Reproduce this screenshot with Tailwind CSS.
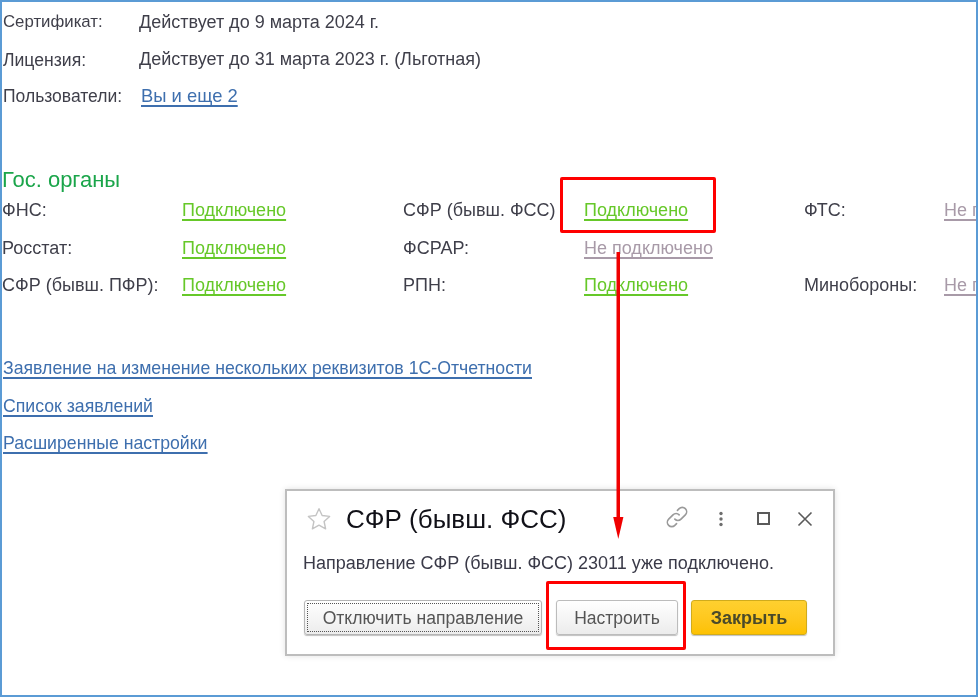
<!DOCTYPE html>
<html lang="ru">
<head>
<meta charset="utf-8">
<script src="https://cdn.jsdelivr.net/npm/@tailwindcss/browser@4"></script>
</head>
<body class="m-0 bg-white">
<div class="relative w-[978px] h-[697px] overflow-hidden bg-white border-2 border-[#5b9bd5] font-['Liberation_Sans',Arial,sans-serif] text-[18px] leading-[20px] text-[#3f3f4a]">
  <div class="flex flex-col pl-px pt-[10px] blur-[0.45px] whitespace-nowrap [text-decoration-skip-ink:none]">
    <div class="grid grid-cols-[136px_1fr] gap-y-[17px]">
      <div class="h-[20px] text-[16.8px]">Сертификат:</div><div class="h-[20px]">Действует до 9 марта 2024 г.</div>
      <div class="h-[20px] translate-y-px text-[17.6px]">Лицензия:</div><div class="h-[20px]">Действует до 31 марта 2023 г. (Льготная)</div>
      <div class="h-[20px] text-[17.5px]">Пользователи:</div><div class="h-[20px] pl-[2px]"><a class="underline decoration-[1.5px] underline-offset-[3px] text-[#3e6fae] text-[18.4px]">Вы и еще 2</a></div>
    </div>
    <div class="mt-[62px] -ml-px text-[22px] leading-[24px] text-[#1aa54a]">Гос. органы</div>
    <div class="mt-[8px] grid grid-cols-[179px_221px_181px_220px_140px_100px] gap-y-[17.5px]">
      <div class="-ml-px">ФНС:</div><div><a class="underline decoration-[1.5px] underline-offset-[3px] text-[#66c829]">Подключено</a></div>
      <div>СФР (бывш. ФСС)</div><div><a class="underline decoration-[1.5px] underline-offset-[3px] text-[#66c829]">Подключено</a></div>
      <div>ФТС:</div><div><a class="underline decoration-[1.5px] underline-offset-[3px] text-[#a89aa8]">Не подключено</a></div>
      <div class="-ml-px">Росстат:</div><div><a class="underline decoration-[1.5px] underline-offset-[3px] text-[#66c829]">Подключено</a></div>
      <div>ФСРАР:</div><div><a class="underline decoration-[1.5px] underline-offset-[3px] text-[#a89aa8]">Не подключено</a></div>
      <div></div><div></div>
      <div class="-ml-px">СФР (бывш. ПФР):</div><div><a class="underline decoration-[1.5px] underline-offset-[3px] text-[#66c829]">Подключено</a></div>
      <div>РПН:</div><div><a class="underline decoration-[1.5px] underline-offset-[3px] text-[#66c829]">Подключено</a></div>
      <div>Минобороны:</div><div><a class="underline decoration-[1.5px] underline-offset-[3px] text-[#a89aa8]">Не подключено</a></div>
    </div>
    <div class="mt-[63px] flex flex-col gap-[17.5px] items-start text-[#3e6fae] text-[17.7px] underline decoration-[1.5px] underline-offset-[3px]">
      <a>Заявление на изменение нескольких реквизитов 1С-Отчетности</a>
      <a>Список заявлений</a>
      <a>Расширенные настройки</a>
    </div>
  </div>

  <div class="absolute left-[283px] top-[487px] w-[550px] h-[167px] bg-white border-2 border-[#bdbdbd] shadow-[0_0_6px_rgba(0,0,0,0.12)] px-[16px] blur-[0.45px]">
    <div class="flex items-center h-[55px]">
      <svg width="26" height="26" viewBox="0 0 24 24" class="ml-[3px] mr-[14px] shrink-0" fill="none" stroke="#c4c4c4" stroke-width="1.3" stroke-linejoin="round"><path d="M12 2.5l2.9 6.3 6.9.8-5.1 4.7 1.4 6.8-6.1-3.4-6.1 3.4 1.4-6.8-5.1-4.7 6.9-.8z"/></svg>
      <div class="text-[26px] leading-[30px] text-[#111118] whitespace-nowrap">СФР (бывш. ФСС)</div>
      <div class="ml-auto flex items-center pr-[4px]">
        <svg width="26" height="26" viewBox="0 0 24 24" fill="none" stroke="#9a9a9a" stroke-width="1.5" stroke-linecap="round" class="-translate-y-[2px]"><path d="M10 14a4 4 0 0 0 5.7 0l4-4a4 4 0 0 0-5.7-5.7l-1.6 1.6"/><path d="M14 10a4 4 0 0 0-5.7 0l-4 4a4 4 0 0 0 5.7 5.7l1.6-1.6"/></svg>
        <svg width="6" height="16" viewBox="0 0 6 16" fill="#6e6e6e" class="ml-[28px]"><circle cx="3" cy="2.5" r="1.7"/><circle cx="3" cy="8" r="1.7"/><circle cx="3" cy="13.5" r="1.7"/></svg>
        <div class="ml-[33px] size-[13px] border-2 border-[#5a5a5a]"></div>
        <svg width="16" height="16" viewBox="0 0 16 16" stroke="#5a5a5a" stroke-width="1.6" class="ml-[27px]"><path d="M1.5 1.5l13 13M14.5 1.5l-13 13"/></svg>
      </div>
    </div>
    <div class="mt-[7px] whitespace-nowrap text-[#3a3a48]">Направление СФР (бывш. ФСС) 23011 уже подключено.</div>
    <div class="mt-[27px] ml-px flex items-center">
      <button class="w-[238px] h-[35px] rounded-[3px] border border-[#b5b5b5] bg-gradient-to-b from-white to-[#ececec] shadow-[0_1px_1px_rgba(0,0,0,0.25)] text-[#555] flex items-center justify-center p-[2px]">
        <span class="flex-1 h-full flex items-center justify-center border border-dotted border-[#555] text-[17.6px]">Отключить направление</span>
      </button>
      <button class="ml-[14px] w-[122px] h-[35px] rounded-[3px] border border-[#bcbcbc] bg-gradient-to-b from-white to-[#ececec] shadow-[0_1px_1px_rgba(0,0,0,0.25)] text-[#555] text-[17.5px]">Настроить</button>
      <button class="ml-[13px] w-[116px] h-[35px] rounded-[3px] border border-[#d0ab1c] bg-gradient-to-b from-[#ffd02f] to-[#fdc100] shadow-[0_1px_1px_rgba(0,0,0,0.25)] font-bold text-[#4a4a2a]">Закрыть</button>
    </div>
  </div>

  <div class="absolute left-[558px] top-[175px] w-[156px] h-[56px] border-[3px] border-[#ff0000] rounded-[2px]"></div>
  <div class="absolute left-[544px] top-[579px] w-[140px] h-[69px] border-[3px] border-[#ff0000] rounded-[2px]"></div>
  <svg class="absolute left-[609px] top-[250px]" width="16" height="290" viewBox="0 0 16 290" fill="#f00000"><rect x="5.5" y="0" width="3.5" height="270"/><path d="M2.2 265h10.2l-5.1 22z"/></svg>
</div>
</body>
</html>
